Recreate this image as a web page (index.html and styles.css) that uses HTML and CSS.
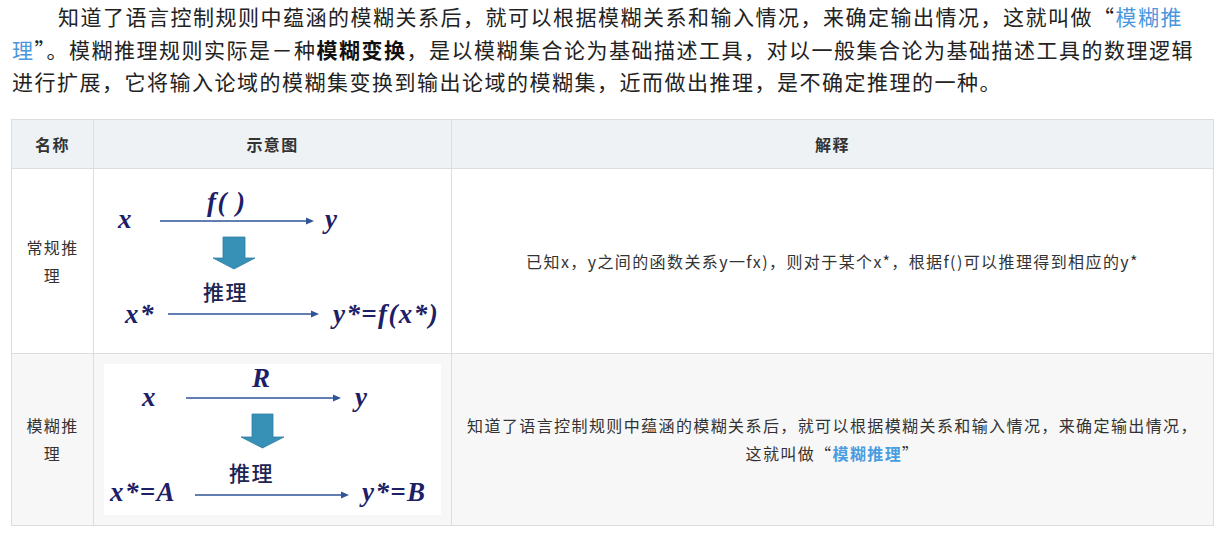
FILE: index.html
```html
<!DOCTYPE html>
<html lang="zh-CN">
<head>
  <meta charset="UTF-8">
  <meta name="viewport" content="width=device-width, initial-scale=1.0">
  <title>模糊推理</title>
  <link rel="stylesheet" href="styles.css">
</head>
<body>

<p class="intro">知道了语言控制规则中蕴涵的模糊关系后，就可以根据模糊关系和输入情况，来确定输出情况，这就叫做“<a class="term" href="#">模糊推理</a>”。模糊推理规则实际是－种<b>模糊变换</b>，是以模糊集合论为基础描述工具，对以一般集合论为基础描述工具的数理逻辑进行扩展，它将输入论域的模糊集变换到输出论域的模糊集，近而做出推理，是不确定推理的一种。</p>

<table class="compare">
  <colgroup>
    <col class="col-name">
    <col class="col-pic">
    <col class="col-desc">
  </colgroup>
  <thead>
    <tr>
      <th>名称</th>
      <th>示意图</th>
      <th>解释</th>
    </tr>
  </thead>
  <tbody>
    <tr>
      <td class="name">常规推理</td>
      <td class="pic">
        <svg class="diagram" width="337" height="164" viewBox="0 0 337 164">
          <rect width="337" height="164" fill="#fff"/>
          <g class="math">
            <text x="14" y="49">x</text>
            <text x="103" y="32" font-size="21">f( )</text>
            <text x="221" y="49">y</text>
            <text x="21" y="144">x*</text>
            <text x="229" y="144">y*=f(x*)</text>
          </g>
          <g class="arrow">
            <line x1="56" y1="42" x2="203" y2="42"/>
            <polygon points="202,38.5 210,42 202,45.5"/>
            <line x1="64" y1="135" x2="208" y2="135"/>
            <polygon points="207,131.5 215,135 207,138.5"/>
          </g>
          <polygon class="down" points="119,58 141,58 141,79 151,79 130,90 109,79 119,79"/>
          <text class="cn" x="99" y="121">推理</text>
        </svg>
      </td>
      <td class="desc">已知x，y之间的函数关系y一fx)，则对于某个x*，根据f()可以推理得到相应的y*</td>
    </tr>
    <tr class="alt">
      <td class="name">模糊推理</td>
      <td class="pic">
        <svg class="diagram" width="337" height="151" viewBox="0 0 337 151">
          <rect width="337" height="151" fill="#fff"/>
          <g class="math">
            <text x="148" y="23" font-size="22">R</text>
            <text x="38" y="42">x</text>
            <text x="251" y="42">y</text>
            <text x="6" y="137">x*=A</text>
            <text x="258" y="137">y*=B</text>
          </g>
          <g class="arrow">
            <line x1="82" y1="34" x2="230" y2="34"/>
            <polygon points="229,30.5 237,34 229,37.5"/>
            <line x1="91" y1="131" x2="238" y2="131"/>
            <polygon points="237,127.5 245,131 237,134.5"/>
          </g>
          <polygon class="down" points="148,50 169,50 169,73 180,73 158.5,84 137,73 148,73"/>
          <text class="cn" x="125" y="117">推理</text>
        </svg>
      </td>
      <td class="desc">知道了语言控制规则中蕴涵的模糊关系后，就可以根据模糊关系和输入情况，来确定输出情况，这就叫做“<a class="term strong" href="#">模糊推理</a>”</td>
    </tr>
  </tbody>
</table>

</body>
</html>
```

FILE: styles.css
```css
body {
  margin: 0;
  padding: 0;
  background-color: #fff;
  color: #333;
  font-family: "Noto Sans CJK SC", sans-serif;
}

.intro {
  margin: 0 10px 0 12px;
  font-size: 21px;
  letter-spacing: 1.5px;
  line-height: 32.5px;
  text-indent: 46px;
  color: #222;
}

.intro b {
  color: #111;
}

.term {
  color: #4a97dd;
  text-decoration: none;
}

.compare {
  margin: 21px 0 0 11px;
  width: 1203px;
  table-layout: fixed;
  border-collapse: collapse;
  font-size: 16px;
  letter-spacing: 1.4px;
  line-height: 28px;
  color: #333;
}

.col-name {
  width: 82px;
}

.col-pic {
  width: 358px;
}

.compare th,
.compare td {
  border: 1px solid #ddd;
  text-align: center;
  vertical-align: middle;
}

.compare th {
  height: 48px;
  padding: 0 8px;
  background-color: #eef2f5;
  font-weight: bold;
  color: #333;
}

.compare td.name {
  padding: 0 8px;
}

.compare td.pic {
  padding: 10px;
}

.compare td.desc {
  padding: 0 10px;
}

.alt td {
  background-color: #f7f7f7;
}

.term.strong {
  font-weight: bold;
  color: #4a9ee0;
}

.diagram {
  display: block;
}

.math text {
  font-family: "Liberation Serif", serif;
  font-style: italic;
  font-weight: bold;
  font-size: 27px;
  fill: #1d2067;
}

.arrow line {
  stroke: #2f5597;
  stroke-width: 1.4;
}

.arrow polygon {
  fill: #2f5597;
}

.down {
  fill: #3790b5;
  stroke: #2f7fa6;
  stroke-width: 0.8;
}

.cn {
  font-family: "Noto Sans CJK SC", sans-serif;
  font-size: 21px;
  font-weight: 500;
  fill: #1d2452;
}
```
